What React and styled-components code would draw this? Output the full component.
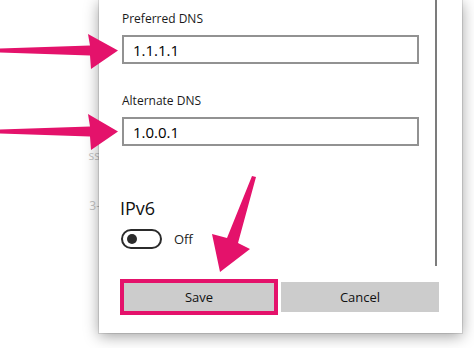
import React from 'react';
import styled, { createGlobalStyle } from 'styled-components';

const GlobalStyle = createGlobalStyle`
  html, body {
    margin: 0;
    padding: 0;
    background: #ffffff;
  }
  body {
    font-family: "Open Sans", "Noto Sans", "Liberation Sans", sans-serif;
  }
`;

const Page = styled.div`
  position: relative;
  width: 474px;
  height: 348px;
  overflow: hidden;
  display: flex;
  background: #ffffff;
`;

const Backdrop = styled.div`
  width: 99px;
  flex: none;
  display: flex;
  flex-direction: column;
  align-items: flex-end;
  padding-top: 149px;
  box-sizing: border-box;
`;

const FaintText = styled.span`
  font-size: 12px;
  line-height: 14px;
  color: #c4c4c4;
  margin-top: ${(p) => p.top || 0}px;
  margin-right: -1px;
`;

const Dialog = styled.div`
  position: relative;
  z-index: 1;
  width: 363px;
  height: 333px;
  flex: none;
  background: #ffffff;
  display: flex;
  flex-direction: column;
  box-shadow: 0 0 0 1px rgba(0, 0, 0, 0.1), 0 3px 14px rgba(0, 0, 0, 0.38);
`;

const Pane = styled.div`
  display: flex;
  height: 266px;
  flex: none;
`;

const Content = styled.div`
  width: 336px;
  flex: none;
  box-sizing: border-box;
  padding: 10px 0 0 23px;
  display: flex;
  flex-direction: column;
`;

const ScrollLine = styled.div`
  width: 2px;
  height: 100%;
  background: #7c7c7c;
`;

const Label = styled.label`
  font-size: 12px;
  line-height: 18px;
  color: #1a1a1a;
  margin-top: ${(p) => p.gap || 0}px;
`;

const Field = styled.input`
  box-sizing: border-box;
  width: 297px;
  height: 29px;
  margin-top: 7px;
  border: 2px solid #929292;
  padding: 0 0 0 9px;
  font-family: inherit;
  font-size: 15px;
  color: #000;
  background: #fff;
  outline: none;
`;

const Heading = styled.div`
  font-size: 18px;
  line-height: 24px;
  color: #111;
  margin-top: 50px;
  margin-left: -2px;
`;

const ToggleRow = styled.div`
  display: flex;
  align-items: center;
  gap: 12px;
  margin-top: 9px;
  margin-left: -1px;
`;

const Toggle = styled.div`
  box-sizing: border-box;
  width: 41px;
  height: 20px;
  border: 2px solid #2b2b2b;
  border-radius: 10px;
  display: flex;
  align-items: center;
  padding-left: 4px;
`;

const Knob = styled.span`
  width: 10px;
  height: 10px;
  border-radius: 50%;
  background: #2b2b2b;
`;

const ToggleText = styled.span`
  font-size: 13px;
  color: #222;
`;

const Footer = styled.div`
  display: flex;
  gap: 3px;
  padding: 16px 0 0 21px;
`;

const Button = styled.button`
  width: 158px;
  height: 30px;
  border: none;
  background: #cccccc;
  font-family: inherit;
  font-size: 13px;
  color: #111;
  padding: 0;
  box-shadow: ${(p) =>
    p.marked
      ? 'inset 4px 0 0 #e4126b, inset -4px 0 0 #e4126b, inset 0 1px 0 #e4126b, inset 0 -1px 0 #e4126b, 0 -3px 0 #e4126b, 0 3px 0 #e4126b'
      : 'none'};
`;

const Arrows = styled.svg`
  position: absolute;
  left: 0;
  top: 0;
  z-index: 2;
  pointer-events: none;
`;

const PINK = '#e4126b';

export default function App() {
  return (
    <>
      <GlobalStyle />
      <Page>
        <Backdrop>
          <FaintText>ss</FaintText>
          <FaintText top={36}>3-</FaintText>
        </Backdrop>
        <Dialog>
          <Pane>
            <Content>
              <Label>Preferred DNS</Label>
              <Field defaultValue="1.1.1.1" />
              <Label gap={28}>Alternate DNS</Label>
              <Field defaultValue="1.0.0.1" />
              <Heading>IPv6</Heading>
              <ToggleRow>
                <Toggle>
                  <Knob />
                </Toggle>
                <ToggleText>Off</ToggleText>
              </ToggleRow>
            </Content>
            <ScrollLine />
          </Pane>
          <Footer>
            <Button marked>Save</Button>
            <Button>Cancel</Button>
          </Footer>
        </Dialog>
        <Arrows width="474" height="348" viewBox="0 0 474 348">
          <polygon
            fill={PINK}
            points="0,48.5 90,45.5 88,34 118,50.5 91,69 90,55.5 0,52.5"
          />
          <polygon
            fill={PINK}
            points="0,129.5 90,126.5 88,114 118,131.5 91,150 90,136.5 0,133.5"
          />
          <polygon
            fill={PINK}
            points="252,176 256,177 238,243 250,249 220,272 212,234 227,238"
          />
        </Arrows>
      </Page>
    </>
  );
}
